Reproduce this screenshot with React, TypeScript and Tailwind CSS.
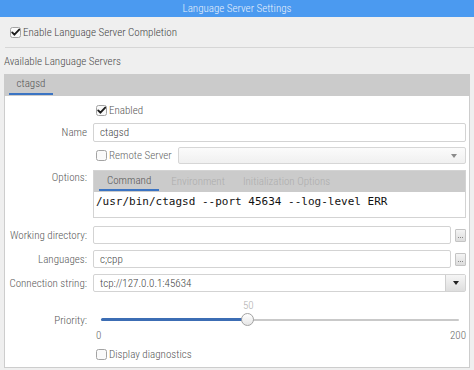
import React from "react";

const Check = ({ checked }: { checked?: boolean }) => (
  <svg width="11" height="11" viewBox="0 0 11 11" className="shrink-0">
    <rect x="0.5" y="0.5" width="10" height="10" rx="2" fill="#fafafa" stroke="#a3a3a3" />
    {checked && (
      <path d="M2.2 5.4 L4.4 7.7 L9.2 2.6" fill="none" stroke="#1c1c1c" strokeWidth="1.9" strokeLinecap="round" strokeLinejoin="round" />
    )}
  </svg>
);

const Label = ({ children, className = "" }: { children: React.ReactNode; className?: string }) => (
  <div className={"w-[82px] shrink-0 text-right whitespace-nowrap text-[#595959] " + className}>{children}</div>
);

const Input = ({ value, className = "" }: { value?: string; className?: string }) => (
  <div className={"h-full bg-white border border-[#d3d3d3] rounded-[2px] flex items-center pl-[6px] text-[#444] " + className}>
    {value}
  </div>
);

const DotsBtn = () => (
  <div className="w-[11px] h-[13px] shrink-0 rounded-[1px] border border-[#c4c4c4] bg-gradient-to-b from-[#f4f4f4] to-[#dcdcdc] flex items-end justify-center pb-[3px]">
    <div className="flex gap-[1px]">
      <div className="w-[1px] h-[1px] bg-[#888]" />
      <div className="w-[1px] h-[1px] bg-[#888]" />
      <div className="w-[1px] h-[1px] bg-[#888]" />
    </div>
  </div>
);

export default function App() {
  return (
    <div className="w-[474px] h-[370px] bg-[#efefef] overflow-hidden flex flex-col text-[11px] leading-none text-[#444] [font-family:Roboto,'Noto_Sans',sans-serif] [font-stretch:80%] [font-weight:350]">
      <div className="h-[17px] shrink-0 bg-[#4b9af0] text-[#e6effb] text-[11px] flex items-center justify-center [font-stretch:82%]">
        Language Server Settings
      </div>
      <div className="h-[30px] shrink-0 flex items-center pl-[10px] gap-[2px]">
        <Check checked />
        <span>Enable Language Server Completion</span>
      </div>
      <div className="ml-[5px] border-t border-[#d6d6d6]" />
      <div className="h-[26px] shrink-0 flex items-center pl-[4px] text-[#4a4a4a]">Available Language Servers</div>
      <div className="mx-[4px] h-[22px] shrink-0 bg-[#cbcbcb] flex items-start">
        <div className="ml-[5px] w-[44px] h-[21px] flex items-center justify-center border-b-2 border-[#3b74c3] text-[#555]">
          ctagsd
        </div>
      </div>
      <div className="mx-[4px] mb-[2px] flex-1 bg-white border-x border-b border-[#cdcdcd] flex flex-col pr-[3px]">
        {/* Enabled */}
        <div className="mt-[4px] h-[20px] flex items-center">
          <Label>{""}</Label>
          <div className="ml-[9px] flex items-center gap-[2px] text-[#555]">
            <Check checked />
            <span>Enabled</span>
          </div>
        </div>
        {/* Name */}
        <div className="mt-[3px] h-[19px] flex items-center gap-[6px]">
          <Label>Name</Label>
          <div className="flex-1 h-full">
            <Input value="ctagsd" />
          </div>
        </div>
        {/* Remote */}
        <div className="mt-[5px] h-[17px] flex items-center">
          <Label>{""}</Label>
          <div className="ml-[9px] flex items-center gap-[2px] whitespace-nowrap text-[#666]">
            <Check />
            <span>Remote Server</span>
          </div>
          <div className="ml-auto w-[288px] h-full rounded-[2px] border border-[#d6d6d6] bg-gradient-to-b from-[#fbfbfb] to-[#f0f0f0] flex items-center justify-end pr-[8px]">
            <svg width="6" height="4" viewBox="0 0 6 4">
              <path d="M0 0 L6 0 L3 4 Z" fill="#8a8a8a" />
            </svg>
          </div>
        </div>
        {/* Options */}
        <div className="mt-[6px] h-[48px] flex items-start gap-[6px]">
          <Label className="pt-[2px]">Options:</Label>
          <div className="flex-1 h-full border border-[#d3d3d3] flex flex-col">
            <div className="h-[21px] bg-[#cbcbcb] flex items-start text-[11px] pl-[5px] whitespace-nowrap [font-stretch:82%]">
              <div className="h-[20px] px-[8px] flex items-center border-b-2 border-[#3b74c3] text-[#555]">Command</div>
              <div className="h-[20px] px-[12px] flex items-center text-[#adadad]">Environment</div>
              <div className="h-[20px] px-[6px] flex items-center text-[#adadad]">Initialization Options</div>
            </div>
            <div className="flex-1 bg-white pl-[2px] pt-[3px] text-[11px] leading-[13px] text-[#111] [font-family:'DejaVu_Sans_Mono',monospace] [font-stretch:100%] [font-weight:400] whitespace-pre">
              /usr/bin/ctagsd --port 45634 --log-level ERR
            </div>
          </div>
        </div>
        {/* Working directory */}
        <div className="mt-[8px] h-[18px] flex items-center gap-[6px]">
          <Label>Working directory:</Label>
          <div className="flex-1 h-full flex items-center gap-[4px]">
            <div className="flex-1 h-full">
              <Input />
            </div>
            <DotsBtn />
          </div>
        </div>
        {/* Languages */}
        <div className="mt-[6px] h-[18px] flex items-center gap-[6px]">
          <Label>Languages:</Label>
          <div className="flex-1 h-full flex items-center gap-[4px]">
            <div className="flex-1 h-full">
              <Input value="c;cpp" />
            </div>
            <DotsBtn />
          </div>
        </div>
        {/* Connection string */}
        <div className="mt-[6px] h-[18px] flex items-center gap-[6px]">
          <Label>Connection string:</Label>
          <div className="flex-1 h-full flex bg-white border border-[#d3d3d3] rounded-[2px]">
            <div className="flex-1 flex items-center pl-[6px] text-[#444]">tcp://127.0.0.1:45634</div>
            <div className="w-[20px] h-full border-l border-[#cfcfcf] bg-gradient-to-b from-[#f6f6f6] to-[#dedede] flex items-center justify-center">
              <svg width="6" height="4" viewBox="0 0 6 4">
                <path d="M0 0 L6 0 L3 4 Z" fill="#222" />
              </svg>
            </div>
          </div>
        </div>
        {/* Priority */}
        <div className="mt-[5px] flex items-start gap-[6px]">
          <Label className="mt-[16px] h-[14px] flex items-center justify-end">Priority:</Label>
          <div className="flex-1 flex flex-col">
            <div className="h-[16px] relative text-[11px] text-[#b0b0b0]">
              <span className="absolute left-[150px] top-[3px]">50</span>
            </div>
            <div className="h-[14px] relative">
              <div className="absolute left-[8px] right-[7px] top-[6px] h-[2px] bg-[#c9c9c9] rounded-full" />
              <div className="absolute left-[8px] w-[146px] top-[5px] h-[3px] bg-[#3c6db4] rounded-full" />
              <div className="absolute left-[148px] top-0 w-[13px] h-[13px] rounded-full border border-[#a3a3a3] bg-gradient-to-b from-white to-[#e6e6e6]" />
            </div>
            <div className="h-[16px] flex items-center justify-between pl-[3px] text-[#666]">
              <span>0</span>
              <span>200</span>
            </div>
          </div>
        </div>
        {/* Display diagnostics */}
        <div className="mt-[3px] h-[16px] flex items-center">
          <Label>{""}</Label>
          <div className="ml-[9px] flex items-center gap-[2px] text-[#555]">
            <Check />
            <span>Display diagnostics</span>
          </div>
        </div>
      </div>
    </div>
  );
}
